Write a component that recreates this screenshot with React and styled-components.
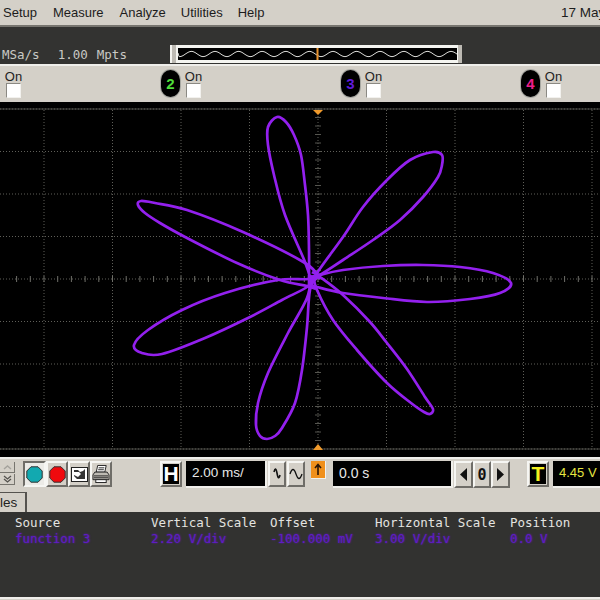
import React from 'react';
import styled, { createGlobalStyle } from 'styled-components';

const GlobalStyle = createGlobalStyle`
  html, body { margin: 0; padding: 0; background: #d4d0c8; }
  #root { width: 600px; height: 600px; overflow: hidden; }
`;

const Page = styled.div`
  width: 600px;
  height: 600px;
  overflow: hidden;
  display: flex;
  flex-direction: column;
  background: #d4d0c8;
`;

const MenuBar = styled.div`
  height: 25px;
  flex: none;
  display: flex;
  align-items: center;
  padding-left: 3px;
  border-bottom: 2px solid #77756f;
  font: 13px/25px "Liberation Sans", Arial, sans-serif;
  color: #1c1c1c;
  white-space: nowrap;
`;

const MenuItem = styled.span`
  margin-right: ${(p) => p.$gap}px;
`;

const MenuDate = styled.span`
  margin-left: auto;
  flex: none;
  width: 39px;
  overflow: hidden;
  font-size: 13.5px;
`;

const StatusBar = styled.div`
  height: 37px;
  flex: none;
  display: flex;
  align-items: flex-end;
  background: #333331;
  border-bottom: 2px solid #efeeea;
  box-sizing: content-box;
`;

const StatusText = styled.div`
  width: 170px;
  height: 19px;
  padding-left: 2px;
  box-sizing: border-box;
  font: 12.5px/19px "DejaVu Sans Mono", monospace;
  word-spacing: 1.5px;
  color: #c9c9c5;
  white-space: pre;
`;

const Navigator = styled.div`
  width: 292px;
  height: 18px;
  margin-bottom: 1px;
  background: linear-gradient(90deg, #f4f4f0 0 2px, #bdbab3 2px 6px, #f4f4f0 6px);
  border-right: 4px solid #bdbab3;
  box-sizing: border-box;
  display: flex;
  align-items: center;
  padding: 0 1px 0 8px;
`;

const NavigatorWave = styled.svg`
  display: block;
  width: 279px;
  height: 12px;
  background: #000;
`;

const ChannelBar = styled.div`
  height: 36px;
  flex: none;
  display: flex;
  margin-left: -155px;
`;

const Channel = styled.div`
  flex: none;
  width: 180px;
  display: flex;
  justify-content: flex-end;
  gap: 5px;
  padding-right: 3px;
  box-sizing: border-box;
`;

const Badge = styled.div`
  width: 19px;
  height: 27px;
  margin-top: 4px;
  border-radius: 50% / 38%;
  background: #000;
  box-shadow: 0 0 0 1px #a8a8a2;
  color: ${(p) => p.$color};
  font: bold 15px/27px "Liberation Sans", Arial, sans-serif;
  text-align: center;
`;

const OnBox = styled.div`
  width: 17px;
  display: flex;
  flex-direction: column;
  align-items: center;
  font: 13px/11px "Liberation Sans", Arial, sans-serif;
  color: #222;
  padding-top: 5px;
`;

const CheckBox = styled.div`
  width: 15px;
  height: 15px;
  margin-top: 1px;
  box-sizing: border-box;
  background: #fff;
  border: 1px solid;
  border-color: #8b8983 #f2f1ee #f2f1ee #8b8983;
`;

const Scope = styled.svg`
  display: block;
  flex: none;
  width: 600px;
  height: 355px;
  background: #000;
`;

const Controls = styled.div`
  height: 53px;
  flex: none;
  border-top: 2px solid #efeeea;
  display: flex;
  flex-direction: column;
`;

const ControlRow = styled.div`
  height: 33px;
  flex: none;
  display: flex;
  align-items: flex-start;
  padding-top: 2px;
  box-sizing: border-box;
`;

const Raised = styled.div`
  flex: none;
  box-sizing: border-box;
  width: ${(p) => p.$w}px;
  height: ${(p) => p.$h || 26}px;
  margin-left: ${(p) => p.$ml || 0}px;
  display: flex;
  align-items: center;
  justify-content: center;
  background: ${(p) => p.$bg || '#d4d0c8'};
  border: 2px solid;
  border-color: ${(p) =>
    p.$pressed ? '#6f6d68 #f6f6f3 #f6f6f3 #6f6d68' : '#f6f6f3 #6f6d68 #6f6d68 #f6f6f3'};
  font: bold 15px "DejaVu Sans Mono", monospace;
  color: #111;
`;

const Spinner = styled.div`
  flex: none;
  width: 15px;
  height: 23px;
  margin-top: 1px;
  display: flex;
  flex-direction: column;
  gap: 1px;
`;

const SpinnerPart = styled.div`
  flex: 1;
  display: flex;
  align-items: center;
  justify-content: center;
  background: #d4d0c8;
  border-right: 1px solid #77756f;
  border-bottom: 1px solid #77756f;
`;

const LetterKey = styled(Raised)`
  padding: 1px;
`;

const LetterFace = styled.div`
  width: 100%;
  height: 100%;
  background: #000;
  color: ${(p) => p.$color};
  font: bold 21px/20px "Liberation Sans", Arial, sans-serif;
  text-align: center;
`;

const Readout = styled.div`
  flex: none;
  box-sizing: content-box;
  width: ${(p) => p.$w}px;
  height: 25px;
  margin-left: ${(p) => p.$ml || 0}px;
  padding-left: 6px;
  background: #000;
  border-right: 2px solid #f0efeb;
  border-bottom: 2px solid #f0efeb;
  color: ${(p) => p.$color || '#e8e8e8'};
  font: ${(p) => p.$size || 13.5}px/24px "Liberation Sans", Arial, sans-serif;
  white-space: nowrap;
  overflow: hidden;
`;

const MarkerKey = styled.div`
  flex: none;
  width: 14px;
  height: 17px;
  margin-left: 6px;
  background: #f0901c;
  border-right: 1px solid #f1f1ee;
  border-bottom: 1px solid #f1f1ee;
  display: flex;
  align-items: center;
  justify-content: center;
`;

const TabRow = styled.div`
  flex: 1;
  display: flex;
  align-items: flex-end;
  border-bottom: 1px solid #f0efeb;
`;

const Tab = styled.div`
  width: 27px;
  height: 20px;
  box-sizing: border-box;
  border-top: 1px solid #55534f;
  border-right: 2px solid #55534f;
  font: 13.5px/20px "Liberation Sans", Arial, sans-serif;
  color: #222;
`;

const ResultPanel = styled.div`
  height: 82px;
  flex: none;
  background: #323230;
  border-bottom: 2px solid #efeeea;
  padding: 3px 0 0 15px;
  box-sizing: content-box;
  display: grid;
  grid-template-columns: 136px 119px 105px 135px 1fr;
  grid-auto-rows: 16px;
  font: 12.5px/16px "DejaVu Sans Mono", monospace;
  white-space: pre;
`;

const Heading = styled.div`
  color: #e4e4e0;
`;

const Value = styled.div`
  color: #5f1cc4;
  text-shadow: 0 0 2px #5f1cc4;
`;

// smooth line through the points, read off the trace by eye
const smooth = (pts) => {
  let d = `M${pts[0][0]} ${pts[0][1]}`;
  for (let i = 0; i < pts.length - 1; i++) {
    const p0 = pts[i - 1] || pts[i];
    const p1 = pts[i];
    const p2 = pts[i + 1];
    const p3 = pts[i + 2] || p2;
    const c1x = p1[0] + (p2[0] - p0[0]) / 6;
    const c1y = p1[1] + (p2[1] - p0[1]) / 6;
    const c2x = p2[0] - (p3[0] - p1[0]) / 6;
    const c2y = p2[1] - (p3[1] - p1[1]) / 6;
    d += `C${c1x.toFixed(1)} ${c1y.toFixed(1)} ${c2x.toFixed(1)} ${c2y.toFixed(1)} ${p2[0]} ${p2[1]}`;
  }
  return d;
};

const petals = [
  // top
  [[312, 284], [305, 262], [285, 215], [274, 175], [268, 145], [268, 127], [277, 117], [286, 122], [294, 135], [301, 155], [305, 185], [308, 215], [309, 250], [309, 288]],
  // upper right
  [[310, 288], [317, 273], [343, 237], [363, 207], [387, 180], [410, 160], [433, 152], [442, 155], [442, 165], [438, 177], [423, 197], [400, 220], [373, 240], [343, 260], [314, 279]],
  // right
  [[310, 279], [320, 275], [343, 270], [383, 266], [423, 265], [460, 267], [493, 273], [511, 283], [500, 293], [470, 299], [427, 302], [383, 298], [343, 293], [317, 287], [308, 284]],
  // lower right
  [[312, 272], [320, 277], [343, 295], [370, 322], [387, 343], [407, 369], [425, 397], [433, 409], [430, 414], [424, 412], [411, 403], [387, 383], [357, 350], [333, 320], [317, 290], [313, 275]],
  // bottom
  [[311, 275], [307, 298], [288, 333], [268, 373], [258, 403], [256, 425], [260, 436], [267, 439], [275, 436], [282, 428], [295, 403], [302, 370], [307, 327], [310, 290], [318, 272]],
  // lower left
  [[322, 274], [308, 279], [278, 280], [225, 293], [182, 310], [148, 330], [134, 345], [142, 353], [162, 354], [205, 338], [248, 318], [282, 300], [307, 287], [320, 274]],
  // upper left
  [[320, 279], [305, 263], [243, 232], [187, 210], [155, 203], [141, 201], [138, 205], [145, 213], [160, 223], [187, 238], [237, 263], [280, 280], [307, 286], [316, 289]],
];

const gridXs = [-4, -3, -2, -1, 1, 2, 3, 4].map((k) => 318 + k * 68.5);
const gridYs = [-4, -3, -2, -1, 1, 2, 3, 4].map((k) => 279 + k * 42.5);

const xTicks = [];
for (let x = 318 - 13.7 * 22; x < 600; x += 13.7) xTicks.push(x);
const yTicks = [];
for (let y = 279 - 8.5 * 20; y <= 449; y += 8.5) yTicks.push(y);

const ScopeView = () => (
  <Scope viewBox="0 102 600 355">
    <line x1="0" x2="600" y1="109" y2="109" stroke="#4a4a45" />
    <line x1="0" x2="600" y1="449" y2="449" stroke="#4a4a45" />
    {gridXs.map((x) => (
      <line key={x} x1={x} x2={x} y1="110" y2="449" stroke="#5f5f59" strokeDasharray="1 2" />
    ))}
    {gridYs.map((y) => (
      <line key={y} x1="0" x2="600" y1={y} y2={y} stroke="#5f5f59" strokeDasharray="1 2" />
    ))}
    <line x1="0" x2="600" y1="279" y2="279" stroke="#5f5f59" strokeDasharray="1 2" />
    <line x1="318" x2="318" y1="110" y2="449" stroke="#5f5f59" strokeDasharray="1 2" />
    {xTicks.map((x) => (
      <line key={x} x1={x} x2={x} y1="276" y2="282" stroke="#6f6f69" />
    ))}
    {yTicks.map((y) => (
      <line key={y} x1="315" x2="321" y1={y} y2={y} stroke="#55554f" />
    ))}
    <path d="M313 110H323L318 115Z" fill="#f09a2c" />
    <path d="M313 450H323L318 444Z" fill="#f09a2c" />
    {petals.map((pts, i) => (
      <path key={i} d={smooth(pts)} fill="none" stroke="#9320ee" strokeWidth="2.7" strokeLinejoin="round" />
    ))}
  </Scope>
);

const navWave = () => {
  let d = 'M0 5';
  for (let x = 1; x <= 279; x++) {
    d += `L${x} ${(6 - 2.6 * Math.sin(((x - 12) / 23.6) * 2 * Math.PI + 1.2)).toFixed(1)}`;
  }
  return d;
};

const channels = [
  { n: 1, color: '#d8d820' },
  { n: 2, color: '#4fdc3a' },
  { n: 3, color: '#5f1bd8' },
  { n: 4, color: '#ee1f8c' },
];

const results = [
  ['Source', 'function 3'],
  ['Vertical Scale', '2.20 V/div'],
  ['Offset', '-100.000 mV'],
  ['Horizontal Scale', '3.00 V/div'],
  ['Position', '0.0 V'],
];

export default function App() {
  return (
    <Page>
      <GlobalStyle />
      <MenuBar>
        <MenuItem $gap={16}>Setup</MenuItem>
        <MenuItem $gap={16}>Measure</MenuItem>
        <MenuItem $gap={15}>Analyze</MenuItem>
        <MenuItem $gap={15}>Utilities</MenuItem>
        <MenuItem $gap={0}>Help</MenuItem>
        <MenuDate>17 May</MenuDate>
      </MenuBar>

      <StatusBar>
        <StatusText>MSa/s  1.00 Mpts</StatusText>
        <Navigator>
          <NavigatorWave viewBox="0 0 279 12">
            <path d={navWave()} fill="none" stroke="#dcdcd8" strokeWidth="1" />
            <rect x="138.5" y="0" width="2" height="12" fill="#e8912c" />
          </NavigatorWave>
        </Navigator>
      </StatusBar>

      <ChannelBar>
        {channels.map((c) => (
          <Channel key={c.n}>
            {c.n > 1 && <Badge $color={c.color}>{c.n}</Badge>}
            <OnBox>
              On
              <CheckBox />
            </OnBox>
          </Channel>
        ))}
      </ChannelBar>

      <ScopeView />

      <Controls>
        <ControlRow>
          <Spinner>
            <SpinnerPart>
              <svg width="9" height="7" viewBox="0 0 9 7">
                <path d="M1 5L4.500 2L8 5" fill="none" stroke="#a5a39d" strokeWidth="1.4" />
              </svg>
            </SpinnerPart>
            <SpinnerPart>
              <svg width="9" height="8" viewBox="0 0 9 8">
                <path d="M1 1L4.500 4L8 1M1 4L4.500 7L8 4" fill="none" stroke="#55534f" strokeWidth="1.3" />
              </svg>
            </SpinnerPart>
          </Spinner>
          <Raised $w={23} $ml={8} $pressed $bg="#ecebe7">
            <svg width="17" height="17" viewBox="0 0 17 17">
              <path d="M5 .8H12L16.200 5V12L12 16.200H5L.8 12V5Z" fill="#12a9b0" stroke="#333" strokeWidth="1" />
            </svg>
          </Raised>
          <Raised $w={22}>
            <svg width="17" height="17" viewBox="0 0 17 17">
              <path d="M5 .8H12L16.200 5V12L12 16.200H5L.8 12V5Z" fill="#f00a0e" stroke="#333" strokeWidth="1" />
            </svg>
          </Raised>
          <Raised $w={22}>
            <svg width="17" height="15" viewBox="0 0 17 15">
              <rect x=".5" y=".5" width="16" height="14" fill="#fff" stroke="#222" />
              <path d="M3 3H7L9 5L12 4L14 2V12H6L3 9Z" fill="#333" />
              <path d="M3 5H8L10 7L7 10L3 8Z" fill="#fff" />
            </svg>
          </Raised>
          <Raised $w={22}>
            <svg width="19" height="20" viewBox="0 0 19 20">
              <path d="M6 1H15L13.500 8H4.500Z" fill="#fff" stroke="#222" />
              <path d="M7 3.500H13M6.500 5.500H12.500" stroke="#222" />
              <path d="M3 8H16L18 11V16H1V11Z" fill="#bdbab3" stroke="#222" />
              <path d="M2 12H17M2 14H17" stroke="#222" />
              <rect x="4" y="16" width="11" height="3" fill="#fff" stroke="#222" />
            </svg>
          </Raised>
          <LetterKey $w={22} $ml={48}>
            <LetterFace $color="#fff">H</LetterFace>
          </LetterKey>
          <Readout $w={73} $ml={4}>2.00 ms/</Readout>
          <Raised $w={18} $ml={1}>
            <svg width="10" height="14" viewBox="0 0 10 14">
              <path d="M2 5C3 1 4 1 5 6C6 12 7 12 8 8" fill="none" stroke="#111" strokeWidth="1.6" />
            </svg>
          </Raised>
          <Raised $w={18} $ml={1}>
            <svg width="14" height="12" viewBox="0 0 14 12">
              <path d="M1 6C3 0 5 0 7 6C9 12 11 12 13 6" fill="none" stroke="#111" strokeWidth="1.3" />
            </svg>
          </Raised>
          <MarkerKey>
            <svg width="10" height="13" viewBox="0 0 10 13">
              <path d="M5 12V2M2 5L5 1.500L8 5" fill="none" stroke="#2a1506" strokeWidth="1.6" />
            </svg>
          </MarkerKey>
          <Readout $w={112} $ml={7} $size={14}>0.0 s</Readout>
          <Raised $w={19} $h={27} $ml={1}>
            <svg width="9" height="13" viewBox="0 0 9 13">
              <path d="M8 0V13L1 6.500Z" fill="#111" />
            </svg>
          </Raised>
          <Raised $w={18} $h={27}>0</Raised>
          <Raised $w={19} $h={27}>
            <svg width="9" height="13" viewBox="0 0 9 13">
              <path d="M1 0V13L8 6.500Z" fill="#111" />
            </svg>
          </Raised>
          <LetterKey $w={22} $ml={17}>
            <LetterFace $color="#f4f020">T</LetterFace>
          </LetterKey>
          <Readout $w={60} $ml={4} $color="#e6e640" $size={13}>4.45 V</Readout>
        </ControlRow>
        <TabRow>
          <Tab>les</Tab>
        </TabRow>
      </Controls>

      <ResultPanel>
        {results.map(([h]) => (
          <Heading key={h}>{h}</Heading>
        ))}
        {results.map(([h, v]) => (
          <Value key={h}>{v}</Value>
        ))}
      </ResultPanel>
    </Page>
  );
}
